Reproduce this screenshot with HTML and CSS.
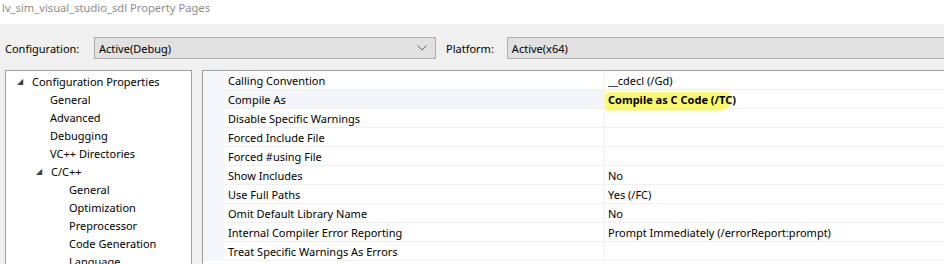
FILE: index.html
```html
<!DOCTYPE html>
<html lang="en">
<head>
    <meta charset="UTF-8">
    <title>lv_sim_visual_studio_sdl Property Pages</title>
    <link rel="stylesheet" href="styles.css">
</head>
<body>
    <div class="titlebar">lv_sim_visual_studio_sdl Property Pages</div>
    <div class="config-bar">
        <span class="label">Configuration:</span>
        <div class="combo combo-config">
            <span>Active(Debug)</span>
            <svg class="chevron" width="10" height="6" viewBox="0 0 10 6"><path d="M0.5 0.5 L5 5 L9.5 0.5" fill="none" stroke="#606060" stroke-width="1"/></svg>
        </div>
        <span class="label label-platform">Platform:</span>
        <div class="combo combo-platform"><span>Active(x64)</span></div>
    </div>
    <div class="content">
        <div class="tree">
            <div class="tree-item lvl0"><span class="arrow">&#9698;</span>Configuration Properties</div>
            <div class="tree-item lvl1">General</div>
            <div class="tree-item lvl1">Advanced</div>
            <div class="tree-item lvl1">Debugging</div>
            <div class="tree-item lvl1">VC++ Directories</div>
            <div class="tree-item lvl1 has-arrow"><span class="arrow">&#9698;</span>C/C++</div>
            <div class="tree-item lvl2">General</div>
            <div class="tree-item lvl2">Optimization</div>
            <div class="tree-item lvl2">Preprocessor</div>
            <div class="tree-item lvl2">Code Generation</div>
            <div class="tree-item lvl2">Language</div>
        </div>
        <div class="grid">
            <div class="row"><div class="gutter"></div><div class="name">Calling Convention</div><div class="value">__cdecl (/Gd)</div></div>
            <div class="row selected"><div class="gutter"></div><div class="name">Compile As</div><div class="value"><span class="marker"></span><b>Compile as C Code (/TC)</b></div></div>
            <div class="row"><div class="gutter"></div><div class="name">Disable Specific Warnings</div><div class="value"></div></div>
            <div class="row"><div class="gutter"></div><div class="name">Forced Include File</div><div class="value"></div></div>
            <div class="row"><div class="gutter"></div><div class="name">Forced #using File</div><div class="value"></div></div>
            <div class="row"><div class="gutter"></div><div class="name">Show Includes</div><div class="value">No</div></div>
            <div class="row"><div class="gutter"></div><div class="name">Use Full Paths</div><div class="value">Yes (/FC)</div></div>
            <div class="row"><div class="gutter"></div><div class="name">Omit Default Library Name</div><div class="value">No</div></div>
            <div class="row"><div class="gutter"></div><div class="name">Internal Compiler Error Reporting</div><div class="value">Prompt Immediately (/errorReport:prompt)</div></div>
            <div class="row"><div class="gutter"></div><div class="name">Treat Specific Warnings As Errors</div><div class="value"></div></div>
        </div>
    </div>
</body>
</html>
```
FILE: styles.css
```css
body {
    margin: 0;
    font-family: 'Noto Sans', 'Open Sans', sans-serif;
    font-size: 11px;
    color: #000;
    background-color: #f0f0f0;
    overflow: hidden;
}
.titlebar {
    height: 24px;
    line-height: 16px;
    padding-left: 2px;
    background-color: #fff;
    color: #8c8c8c;
    font-size: 11.2px;
}
.config-bar {
    display: flex;
    align-items: center;
    height: 22px;
    padding: 13px 0 11px 5px;
}
.label {
    width: 89px;
}
.label-platform {
    width: auto;
    margin: 0 13px 0 10px;
}
.combo {
    display: flex;
    align-items: center;
    justify-content: space-between;
    height: 20px;
    border: 1px solid #adadad;
    background-color: #e1e1e1;
    padding: 0 8px 0 4px;
}
.combo-config {
    width: 328px;
}
.combo-platform {
    flex: 1;
    border-right: none;
}
.content {
    display: flex;
    padding-left: 5px;
    height: 194px;
}
.tree {
    width: 185px;
    border: 1px solid #a0a0a0;
    border-bottom: none;
    background-color: #fff;
    padding-top: 1px;
    margin-right: 10px;
}
.tree-item {
    height: 18px;
    line-height: 20px;
    white-space: nowrap;
}
.arrow {
    display: inline-block;
    font-size: 8px;
    line-height: 18px;
    vertical-align: top;
    color: #404040;
    width: 15px;
}
.lvl0 {
    padding-left: 11px;
}
.lvl1 {
    padding-left: 44px;
}
.lvl1.has-arrow {
    padding-left: 30px;
}
.lvl2 {
    padding-left: 63px;
}
.grid {
    flex: 1;
    border-top: 1px solid #a0a0a0;
    border-left: 1px solid #a0a0a0;
    background-color: #fff;
}
.row {
    display: flex;
    height: 19px;
    line-height: 20px;
}
.gutter {
    width: 21px;
    background-color: #f4f6fa;
}
.name {
    width: 376px;
    padding-left: 4px;
    border-bottom: 1px solid #f0f0f0;
    border-right: 1px solid #f0f0f0;
    white-space: nowrap;
}
.value {
    position: relative;
    flex: 1;
    padding-left: 3px;
    border-bottom: 1px solid #f0f0f0;
    white-space: nowrap;
}
.selected .name {
    background-color: #f3f5f9;
}
.value b {
    position: relative;
}
.marker {
    position: absolute;
    left: 0;
    top: 2px;
    width: 126px;
    height: 19px;
    background-color: #f8f85a;
    border-radius: 3px 6px 10px 4px;
    filter: blur(1px);
    opacity: 0.85;
}
```
